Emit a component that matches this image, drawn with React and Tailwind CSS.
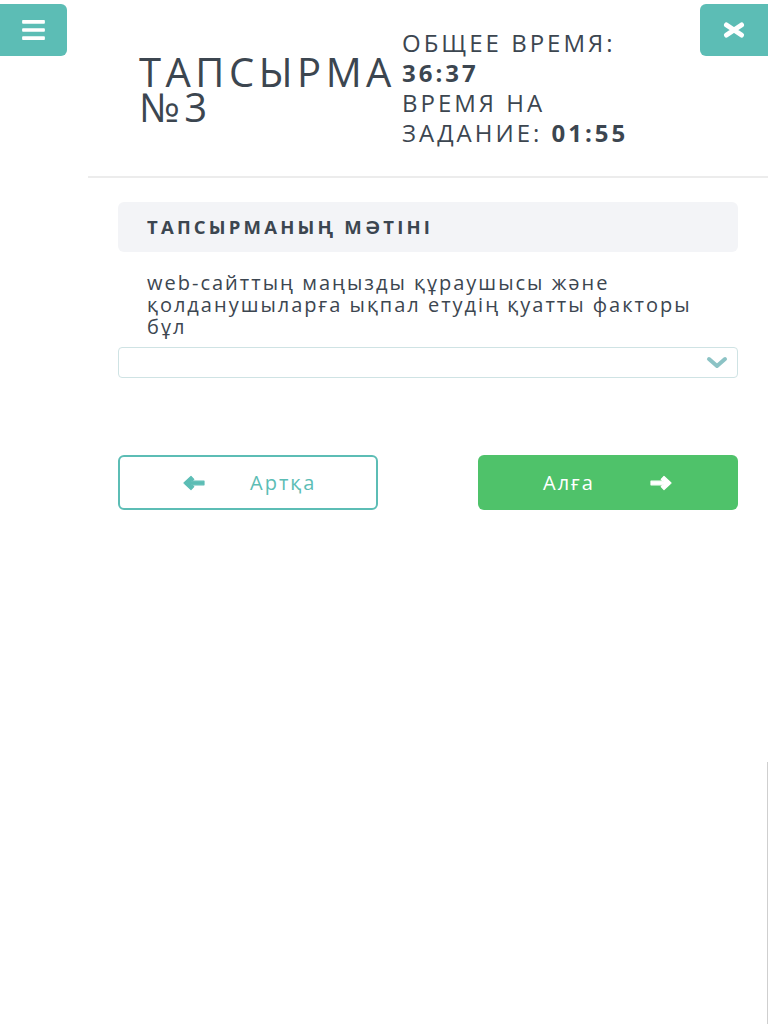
import React from 'react';
import { FaBars } from 'react-icons/fa';

const ArrowIcon = ({ flip }) => (
  <svg width="22" height="16" viewBox="0 0 22 16" className={flip ? 'rotate-180' : ''}>
    <path
      d="M1 8 L8 1.5 L10.8 4.3 L8 6.2 H21 V9.8 H8 L10.8 11.7 L8 14.5 Z"
      fill="currentColor"
      stroke="currentColor"
      strokeWidth="1.2"
      strokeLinejoin="round"
    />
  </svg>
);

const App = () => {
  return (
    <div className="relative w-full min-h-[1024px] bg-white text-[#3c4650] font-['Open_Sans',sans-serif]">
      {/* Menu button */}
      <button className="absolute top-1 left-[-8px] w-[75px] h-[52px] rounded-md bg-[#5cbdb5] flex items-center justify-center pl-2 text-white">
        <FaBars className="w-[31px] h-[26px]" />
      </button>

      {/* Close button */}
      <button className="absolute top-1 left-[700px] w-[76px] h-[52px] rounded-md bg-[#5cbdb5] flex items-center pl-[23px] text-white">
        <svg width="22" height="16" viewBox="0 0 22 16">
          <path d="M3.5 3 L18.5 13 M18.5 3 L3.5 13" stroke="white" strokeWidth="5" strokeLinecap="round" />
        </svg>
      </button>

      <div className="ml-[88px]">
        {/* Header */}
        <div className="h-[178px] border-b-2 border-[#ececec] flex items-center pl-[51px]">
          <h1 className="w-[263px] shrink-0 text-[40px] leading-[35px] font-normal tracking-[4.5px] mt-[2px]">
            ТАПСЫРМА №3
          </h1>
          <div className="w-[240px] text-[24px] leading-[30px] tracking-[3px]">
            ОБЩЕЕ ВРЕМЯ: <span className="font-bold">36:37</span>
            <br />
            ВРЕМЯ НА ЗАДАНИЕ: <span className="font-bold">01:55</span>
          </div>
        </div>

        {/* Body */}
        <div className="px-[30px] pt-[24px]">
          <div className="h-[50px] rounded-md bg-[#f3f4f7] flex items-center px-[29px]">
            <h3 className="text-[18.5px] font-bold tracking-[3.2px]">ТАПСЫРМАНЫҢ МӘТІНІ</h3>
          </div>

          <p className="mt-[20px] px-[29px] text-[20px] leading-[22px] tracking-[2px]">
            web-сайттың маңызды құраушысы және қолданушыларға ықпал етудің қуатты факторы бұл
          </p>

          <div className="mt-[9px] h-[31px] rounded border border-[#cfe3e4] flex items-center justify-end pr-[9px]">
            <svg width="22" height="13" viewBox="0 0 22 13">
              <path d="M3 3 L11 10 L19 3" fill="none" stroke="#8cc3c5" strokeWidth="4" strokeLinecap="round" strokeLinejoin="round" />
            </svg>
          </div>

          {/* Navigation */}
          <div className="mt-[77px] flex justify-between">
            <button className="w-[260px] h-[55px] rounded-md border-2 border-[#5cbdb5] text-[#5cbdb5] flex items-center pl-[63px] text-[20px] tracking-[2px]">
              <ArrowIcon />
              <span className="ml-[45px]">Артқа</span>
            </button>
            <button className="w-[260px] h-[55px] rounded-md bg-[#4fc26a] text-white flex items-center pl-[65px] text-[20px] tracking-[2px]">
              <span>Алға</span>
              <span className="ml-[55px] flex">
                <ArrowIcon flip />
              </span>
            </button>
          </div>
        </div>
      </div>

      <div className="absolute right-0 top-[762px] bottom-0 w-px bg-[#cfcfcf]" />
    </div>
  );
};

export default App;
